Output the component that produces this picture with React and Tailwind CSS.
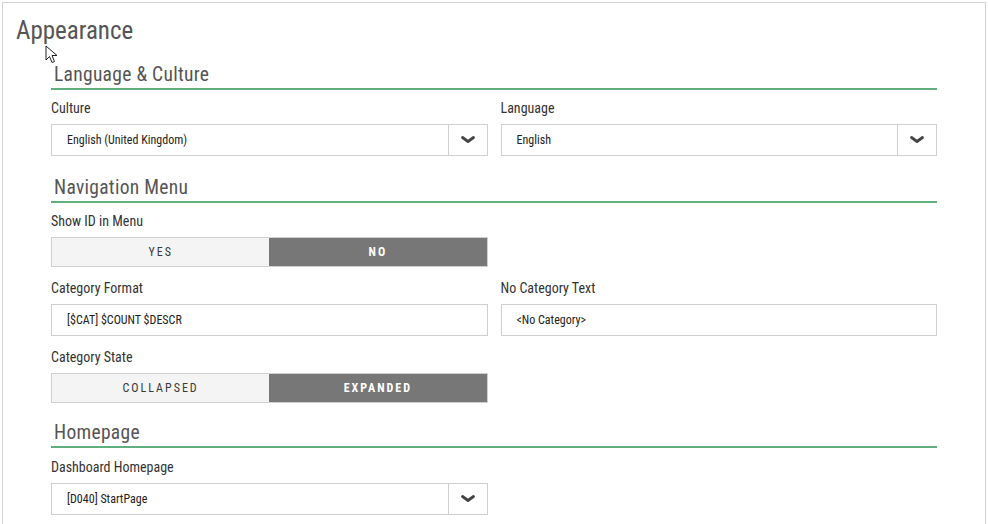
import React from "react";

const font = {
  fontFamily: '"Roboto Condensed", "Liberation Sans Narrow", "DejaVu Sans Condensed", Roboto, sans-serif',
};

const Chevron = () => (
  <svg width="16" height="10" viewBox="0 0 16 10">
    <path d="M2.5 2.5 L8 6.5 L13.5 2.5" fill="none" stroke="#444" strokeWidth="2.8" strokeLinecap="round" strokeLinejoin="round" />
  </svg>
);

const Section = ({ title }) => (
  <div className="border-b-2 border-[#5fae7d] pl-[3px] pb-[1px]">
    <h2 className="text-[19.5px] leading-[24px] text-[#555] tracking-[0.3px]">{title}</h2>
  </div>
);

const Label = ({ children }) => (
  <div className="text-[14px] leading-[18px] text-[#333] mb-[7px]">{children}</div>
);

const Select = ({ value }) => (
  <div className="flex h-[32px] border border-[#cfcfcf] bg-white">
    <div className="flex-1 flex items-center pl-[15px] text-[12px] text-[#222]">{value}</div>
    <div className="w-[39px] border-l border-[#cfcfcf] flex items-center justify-center">
      <Chevron />
    </div>
  </div>
);

const Input = ({ value }) => (
  <div className="flex items-center h-[32px] border border-[#cfcfcf] bg-white pl-[15px] text-[12px] text-[#222]">
    {value}
  </div>
);

const Toggle = ({ left, right }) => (
  <div className="flex h-[30px] border border-[#cfcfcf] text-[12px] tracking-[2px]">
    <div className="flex-1 flex items-center justify-center bg-[#f4f4f4] text-[#3a3a3a] font-normal">{left}</div>
    <div className="flex-1 flex items-center justify-center bg-[#777] text-white font-bold">{right}</div>
  </div>
);

export default function App() {
  return (
    <div className="w-[988px] h-[524px] bg-white overflow-hidden pt-[2px] pl-[2px]" style={font}>
      <div className="relative w-[984px] h-[540px] border border-[#d2d2d2] pl-[13px]">
        <h1 className="text-[25px] leading-[30px] text-[#555] mt-[13px]">Appearance</h1>
        {/* mouse pointer */}
        <svg className="absolute left-[42px] top-[42px]" width="14" height="20" viewBox="0 0 14 20">
          <path d="M1 1 L1 15 L4.5 11.5 L7 17.5 L9.5 16.5 L7 10.5 L12 10.5 Z" fill="white" stroke="#222" strokeWidth="1" strokeLinejoin="round" />
        </svg>
        <div className="ml-[35px] w-[886px]">
          <div className="mt-[17px]">
            <Section title="Language & Culture" />
          </div>
          <div className="grid grid-cols-2 gap-x-[13px] mt-[9px]">
            <div>
              <Label>Culture</Label>
              <Select value="English (United Kingdom)" />
            </div>
            <div>
              <Label>Language</Label>
              <Select value="English" />
            </div>
          </div>

          <div className="mt-[20px]">
            <Section title="Navigation Menu" />
          </div>
          <div className="grid grid-cols-2 gap-x-[13px] mt-[9px]">
            <div>
              <Label>Show ID in Menu</Label>
              <Toggle left="YES" right="NO" />
            </div>
            <div />
          </div>
          <div className="grid grid-cols-2 gap-x-[13px] mt-[12px]">
            <div>
              <Label>Category Format</Label>
              <Input value="[$CAT] $COUNT $DESCR" />
            </div>
            <div>
              <Label>No Category Text</Label>
              <Input value="<No Category>" />
            </div>
          </div>
          <div className="grid grid-cols-2 gap-x-[13px] mt-[12px]">
            <div>
              <Label>Category State</Label>
              <Toggle left="COLLAPSED" right="EXPANDED" />
            </div>
            <div />
          </div>

          <div className="mt-[18px]">
            <Section title="Homepage" />
          </div>
          <div className="grid grid-cols-2 gap-x-[13px] mt-[10px]">
            <div>
              <Label>Dashboard Homepage</Label>
              <Select value="[D040] StartPage" />
            </div>
            <div />
          </div>
        </div>
      </div>
    </div>
  );
}
